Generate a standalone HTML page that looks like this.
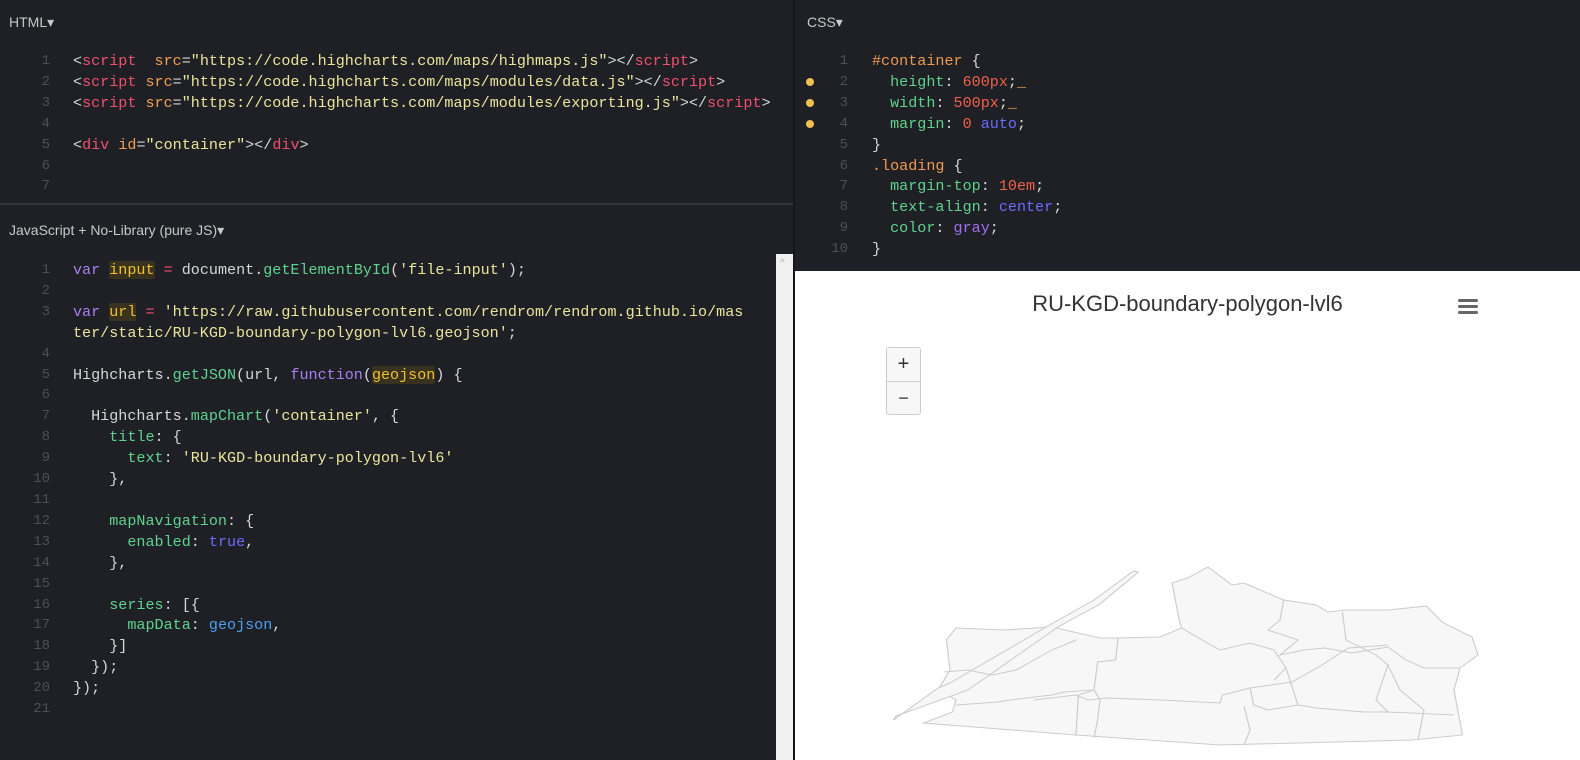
<!DOCTYPE html>
<html><head><meta charset="utf-8"><style>
*{margin:0;padding:0;box-sizing:border-box}
body{width:1580px;height:760px;background:#1e2026;overflow:hidden;position:relative;font-family:"Liberation Sans",sans-serif}
.hdr{position:absolute;color:#c8c8c8;font-size:14px}
.code{position:absolute;font-family:"Liberation Mono",monospace;font-size:15.1px;line-height:20.9px;white-space:pre;color:#d6d6d6}
.ln{position:absolute;font-family:"Liberation Mono",monospace;font-size:14px;line-height:20.9px;color:#4b4f57;text-align:right;white-space:pre}
.t{color:#f0506e}.a{color:#f0a050}.s{color:#ebe59a}.p{color:#a97ff0}.g{color:#5fd38d}.h{color:#f0c030;background:#38321e;border-radius:2px}
.o{color:#f09a50}.r{color:#f0604a}.b{color:#6b6bff}.v{color:#a070f0}.bl{color:#4aa0f0}.e{color:#f0506e}
.dot{position:absolute;width:8px;height:8px;border-radius:50%;background:#f0c050;left:806px}
</style></head><body>
<div class="hdr" style="left:9px;top:14px">HTML▾</div>
<div class="ln" style="left:20px;top:51px;width:30px">1
2
3
4
5
6
7</div>
<div class="code" style="left:73px;top:51px">&lt;<span class="t">script</span>  <span class="a">src</span>=<span class="s">"https://code.highcharts.com/maps/highmaps.js"</span>&gt;&lt;/<span class="t">script</span>&gt;
&lt;<span class="t">script</span> <span class="a">src</span>=<span class="s">"https://code.highcharts.com/maps/modules/data.js"</span>&gt;&lt;/<span class="t">script</span>&gt;
&lt;<span class="t">script</span> <span class="a">src</span>=<span class="s">"https://code.highcharts.com/maps/modules/exporting.js"</span>&gt;&lt;/<span class="t">script</span>&gt;

&lt;<span class="t">div</span> <span class="a">id</span>=<span class="s">"container"</span>&gt;&lt;/<span class="t">div</span>&gt;</div>
<div style="position:absolute;left:0;top:203px;width:793px;height:2px;background:#33363d"></div>
<div class="hdr" style="left:9px;top:222px">JavaScript + No-Library (pure JS)▾</div>
<div class="ln" style="left:20px;top:260px;width:30px">1
2
3

4
5
6
7
8
9
10
11
12
13
14
15
16
17
18
19
20
21</div>
<div class="code" style="left:73px;top:260px"><span class="p">var</span> <span class="h">input</span> <span class="e">=</span> document.<span class="g">getElementById</span>(<span class="s">'file-input'</span>);

<span class="p">var</span> <span class="h">url</span> <span class="e">=</span> <span class="s">'https://raw.githubusercontent.com/rendrom/rendrom.github.io/mas</span>
<span class="s">ter/static/RU-KGD-boundary-polygon-lvl6.geojson'</span>;

Highcharts.<span class="g">getJSON</span>(url, <span class="p">function</span>(<span class="h">geojson</span>) {

  Highcharts.<span class="g">mapChart</span>(<span class="s">'container'</span>, {
    <span class="g">title</span>: {
      <span class="g">text</span>: <span class="s">'RU-KGD-boundary-polygon-lvl6'</span>
    },

    <span class="g">mapNavigation</span>: {
      <span class="g">enabled</span>: <span class="b">true</span>,
    },

    <span class="g">series</span>: [{
      <span class="g">mapData</span>: <span class="bl">geojson</span>,
    }]
  });
});</div>
<div style="position:absolute;left:776px;top:254px;width:17px;height:506px;background:#f0f0f0"></div>
<div style="position:absolute;left:780px;top:258px;color:#aaa;font-size:10px">^</div>
<div style="position:absolute;left:793px;top:0;width:2px;height:760px;background:#15161a"></div>
<div class="hdr" style="left:807px;top:14px">CSS▾</div>
<div class="dot" style="top:78px"></div><div class="dot" style="top:99px"></div><div class="dot" style="top:120px"></div>
<div class="ln" style="left:820px;top:51px;width:28px">1
2
3
4
5
6
7
8
9
10</div>
<div class="code" style="left:872px;top:51px"><span class="o">#container</span> {
  <span class="g">height</span>: <span class="r">600px</span>;<span class="a">_</span>
  <span class="g">width</span>: <span class="r">500px</span>;<span class="a">_</span>
  <span class="g">margin</span>: <span class="r">0</span> <span class="b">auto</span>;
}
<span class="o">.loading</span> {
  <span class="g">margin-top</span>: <span class="r">10em</span>;
  <span class="g">text-align</span>: <span class="b">center</span>;
  <span class="g">color</span>: <span class="v">gray</span>;
}</div>
<div style="position:absolute;left:795px;top:271px;width:785px;height:489px;background:#fff">
<div style="position:absolute;left:0;width:785px;top:20px;text-align:center;font-size:22px;color:#333">RU-KGD-boundary-polygon-lvl6</div>
<div style="position:absolute;left:663px;top:28px;width:20px">
<div style="height:3px;background:#666;border-radius:2px;margin-bottom:3px"></div>
<div style="height:3px;background:#666;border-radius:2px;margin-bottom:3px"></div>
<div style="height:3px;background:#666;border-radius:2px"></div></div>
<div style="position:absolute;left:91px;top:76px;width:35px;height:68px;border:1px solid #ccc;border-radius:3px;background:#f7f7f7">
<div style="height:34px;border-bottom:1px solid #ccc;text-align:center;font-size:20px;line-height:33px;color:#333">+</div>
<div style="text-align:center;font-size:18px;line-height:32px;color:#333">−</div></div>
</div>
<svg style="position:absolute;left:0;top:0" width="1580" height="760">
<g transform="translate(860,0) scale(1.2,1) translate(-860,0)">
<g fill="#f7f7f7" stroke="#cccccc" stroke-width="1">
<polygon points="940,628 980,630 1020,627 1060,638 1075,638 1110,637 1128,628 1126,620 1120,583 1133,578 1150,567 1170,585 1180,583 1213,600 1240,605 1250,612 1265,610 1300,610 1332,606 1345,622 1370,637 1375,655 1360,668 1355,690 1362,735 1320,740 1160,745 1040,735 913,723 937,712 940,700 925,690 935,670 932,640"/>
<polygon points="888,720 925,688 935,683 1018,625 1055,600 1088,571 1092,572 1084,580 1060,604 1025,627 950,690 890,716"/>
</g>
<g fill="none" stroke="#cccccc" stroke-width="1">
<path d="M1075,638 L1073,660 L1058,662 L1055,690 L1042,695 L1040,735"/>
<path d="M1005,700 L1040,695 L1050,700 L1065,698 L1110,700 L1160,703 L1162,695 L1185,688 L1220,682 L1245,665 L1267,648 L1300,645"/>
<path d="M1128,628 L1145,640 L1160,650 L1185,643 L1205,650 L1215,668 L1205,680"/>
<path d="M1213,600 L1210,620 L1200,630 L1225,640 L1210,655 L1230,650 L1247,648 L1270,653 L1300,647 L1315,660 L1330,668 L1360,668"/>
<path d="M1262,612 L1265,640 L1290,655 L1300,665 L1310,690 L1330,710 L1325,740"/>
<path d="M1300,665 L1290,700 L1300,712 L1355,715"/>
<path d="M1215,668 L1225,705 L1240,708 L1280,712 L1300,712"/>
<path d="M1185,688 L1188,705 L1200,710 L1225,705 M1180,706 L1185,730 L1180,745"/>
<path d="M1055,690 L1030,692 L1020,695 L985,700 L975,702 L940,705 M930,672 L950,670 L970,675 L990,670 L1005,660 L1020,650 L1040,640"/>
<path d="M1055,690 L1060,700 L1058,720 L1055,738"/>
</g></g>
</svg>
</body></html>
